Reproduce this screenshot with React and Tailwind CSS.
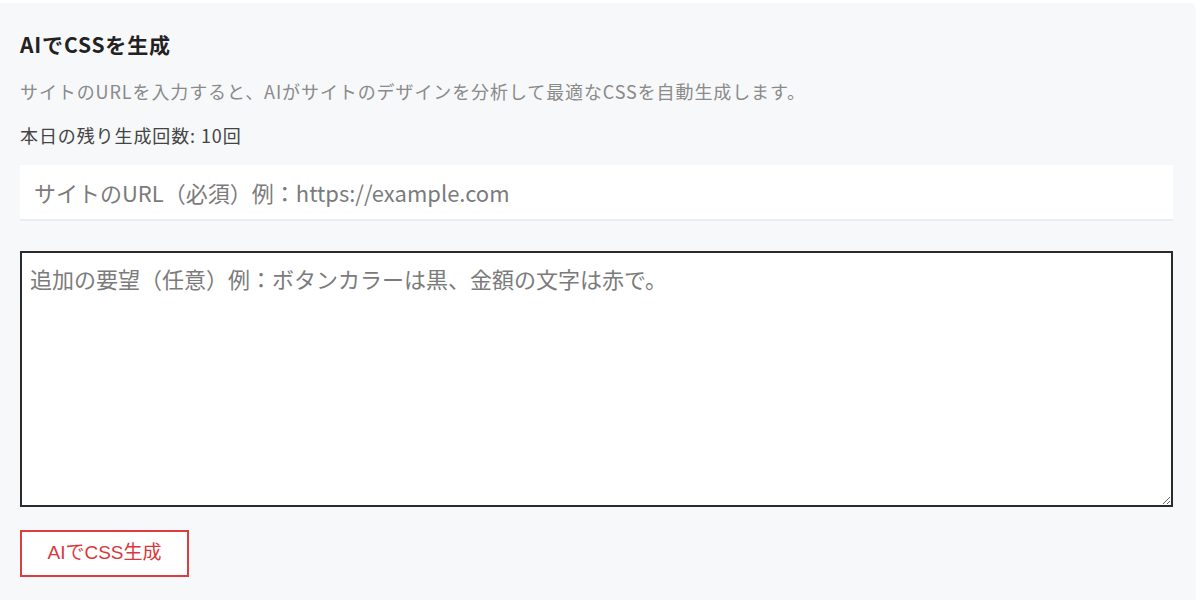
import React, { useState } from 'react';

const jp = { fontFamily: '"Noto Sans CJK JP", "Noto Sans", sans-serif' };

export default function App() {
  const [url, setUrl] = useState('');
  const [request, setRequest] = useState('');

  return (
    <div className="w-[1200px] h-[600px] bg-white overflow-hidden pt-[3px]" style={jp}>
      {/* パネル */}
      <div className="w-[1196px] h-[620px] bg-[#f7f8fa] rounded-r-md px-5 pt-[27px] flex flex-col items-start">
        <h2 className="text-[21px] leading-[28px] font-bold text-[#222] tracking-[0.04em]">AIでCSSを生成</h2>
        <p className="mt-[20px] text-[18px] leading-[26px] text-[#8a8a8a] tracking-[0.05em]">
          サイトのURLを入力すると、AIがサイトのデザインを分析して最適なCSSを自動生成します。
        </p>
        <p className="mt-[18px] text-[18px] leading-[26px] text-[#444] tracking-[0.05em]">本日の残り生成回数: 10回</p>

        <input
          type="text"
          value={url}
          onChange={e => setUrl(e.target.value)}
          placeholder="サイトのURL（必須）例：https://example.com"
          className="mt-[17px] w-[1153px] h-[56px] bg-white border-b-2 border-[#ebecf0] px-[14px] text-[22px] text-[#333] placeholder:text-[#7b7b7b] outline-none"
        />

        <textarea
          value={request}
          onChange={e => setRequest(e.target.value)}
          placeholder="追加の要望（任意）例：ボタンカラーは黒、金額の文字は赤で。"
          className="mt-[30px] w-[1153px] h-[256px] bg-white border-2 border-[#2b2b2b] px-2 py-[10px] text-[22px] leading-[30px] text-[#333] placeholder:text-[#7b7b7b] outline-none"
        />

        <button
          className="mt-[23px] w-[169px] h-[47px] bg-white border-2 border-[#dc3d41] text-[#d9373b] text-[19px]"
          style={{ fontFamily: '"Liberation Sans", "Noto Sans CJK JP", sans-serif' }}
        >
          AIでCSS生成
        </button>
      </div>
    </div>
  );
}
